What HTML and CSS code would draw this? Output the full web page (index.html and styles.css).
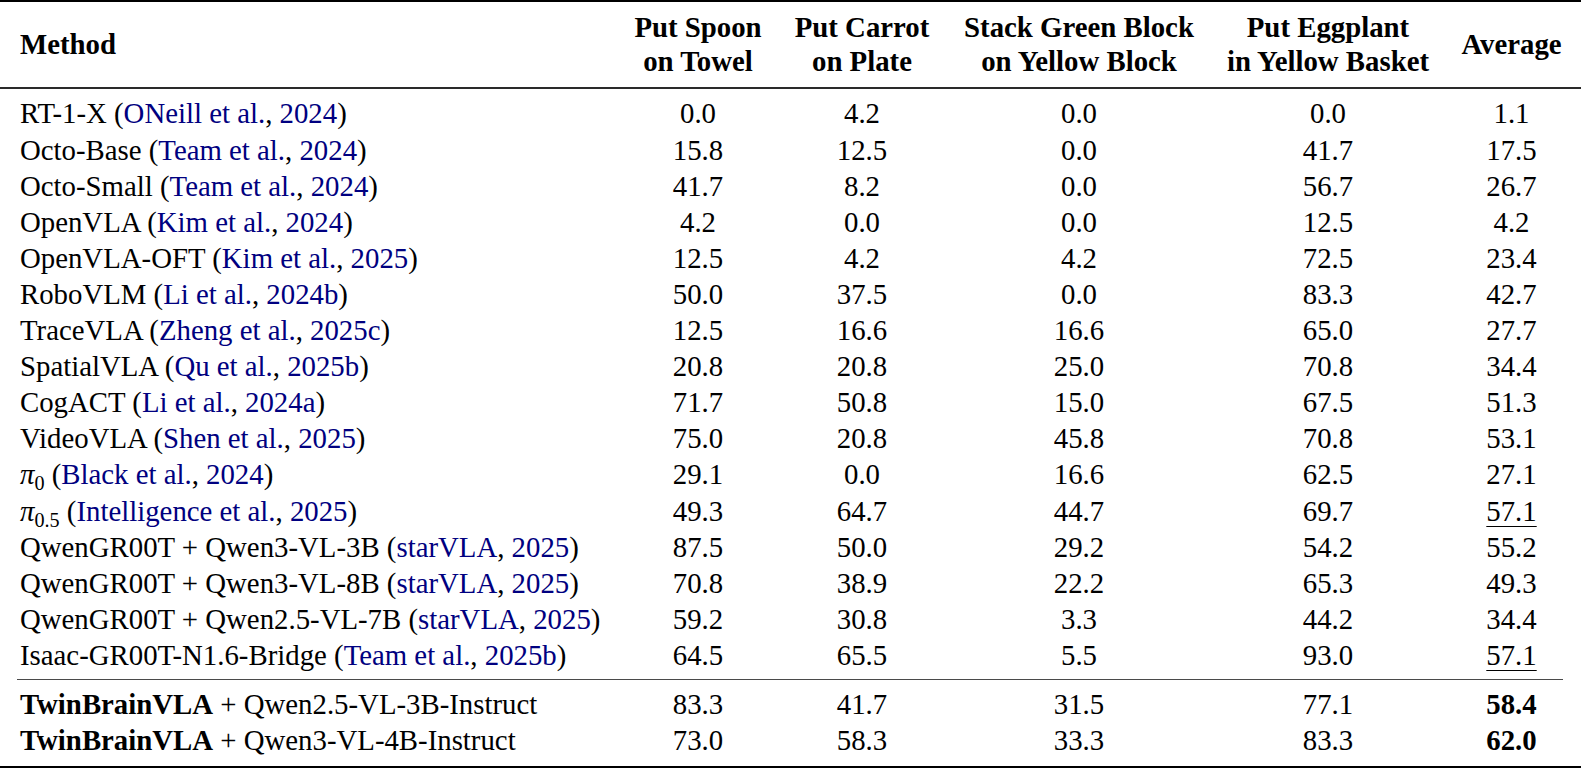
FILE: index.html
```html
<!DOCTYPE html>
<html>
<head>
<meta charset="utf-8">
<link rel="stylesheet" href="styles.css">
</head>
<body>
<table class="results">
  <colgroup>
    <col class="c-method">
    <col class="c-spoon">
    <col class="c-carrot">
    <col class="c-stack">
    <col class="c-egg">
    <col class="c-avg">
  </colgroup>
  <thead>
    <tr>
      <th class="method single">Method</th>
      <th>Put Spoon<br>on Towel</th>
      <th>Put Carrot<br>on Plate</th>
      <th>Stack Green Block<br>on Yellow Block</th>
      <th>Put Eggplant<br>in Yellow Basket</th>
      <th class="single">Average</th>
    </tr>
  </thead>
  <tbody class="main">
    <tr><td class="method">RT-1-X (<a>ONeill et al.</a>, <a>2024</a>)</td><td>0.0</td><td>4.2</td><td>0.0</td><td>0.0</td><td>1.1</td></tr>
    <tr><td class="method">Octo-Base (<a>Team et al.</a>, <a>2024</a>)</td><td>15.8</td><td>12.5</td><td>0.0</td><td>41.7</td><td>17.5</td></tr>
    <tr><td class="method">Octo-Small (<a>Team et al.</a>, <a>2024</a>)</td><td>41.7</td><td>8.2</td><td>0.0</td><td>56.7</td><td>26.7</td></tr>
    <tr><td class="method">OpenVLA (<a>Kim et al.</a>, <a>2024</a>)</td><td>4.2</td><td>0.0</td><td>0.0</td><td>12.5</td><td>4.2</td></tr>
    <tr><td class="method">OpenVLA-OFT (<a>Kim et al.</a>, <a>2025</a>)</td><td>12.5</td><td>4.2</td><td>4.2</td><td>72.5</td><td>23.4</td></tr>
    <tr><td class="method">RoboVLM (<a>Li et al.</a>, <a>2024b</a>)</td><td>50.0</td><td>37.5</td><td>0.0</td><td>83.3</td><td>42.7</td></tr>
    <tr><td class="method">TraceVLA (<a>Zheng et al.</a>, <a>2025c</a>)</td><td>12.5</td><td>16.6</td><td>16.6</td><td>65.0</td><td>27.7</td></tr>
    <tr><td class="method">SpatialVLA (<a>Qu et al.</a>, <a>2025b</a>)</td><td>20.8</td><td>20.8</td><td>25.0</td><td>70.8</td><td>34.4</td></tr>
    <tr><td class="method">CogACT (<a>Li et al.</a>, <a>2024a</a>)</td><td>71.7</td><td>50.8</td><td>15.0</td><td>67.5</td><td>51.3</td></tr>
    <tr><td class="method">VideoVLA (<a>Shen et al.</a>, <a>2025</a>)</td><td>75.0</td><td>20.8</td><td>45.8</td><td>70.8</td><td>53.1</td></tr>
    <tr><td class="method"><i class="pi">π</i><sub>0</sub> (<a>Black et al.</a>, <a>2024</a>)</td><td>29.1</td><td>0.0</td><td>16.6</td><td>62.5</td><td>27.1</td></tr>
    <tr><td class="method"><i class="pi">π</i><sub>0.5</sub> (<a>Intelligence et al.</a>, <a>2025</a>)</td><td>49.3</td><td>64.7</td><td>44.7</td><td>69.7</td><td><span class="second">57.1</span></td></tr>
    <tr><td class="method">QwenGR00T + Qwen3-VL-3B (<a>starVLA</a>, <a>2025</a>)</td><td>87.5</td><td>50.0</td><td>29.2</td><td>54.2</td><td>55.2</td></tr>
    <tr><td class="method">QwenGR00T + Qwen3-VL-8B (<a>starVLA</a>, <a>2025</a>)</td><td>70.8</td><td>38.9</td><td>22.2</td><td>65.3</td><td>49.3</td></tr>
    <tr><td class="method">QwenGR00T + Qwen2.5-VL-7B (<a>starVLA</a>, <a>2025</a>)</td><td>59.2</td><td>30.8</td><td>3.3</td><td>44.2</td><td>34.4</td></tr>
    <tr><td class="method">Isaac-GR00T-N1.6-Bridge (<a>Team et al.</a>, <a>2025b</a>)</td><td>64.5</td><td>65.5</td><td>5.5</td><td>93.0</td><td><span class="second">57.1</span></td></tr>
  </tbody>
  <tbody class="ours">
    <tr class="sep"><td colspan="6"><div class="midrule"></div></td></tr>
    <tr><td class="method"><b>TwinBrainVLA</b> + Qwen2.5-VL-3B-Instruct</td><td>83.3</td><td>41.7</td><td>31.5</td><td>77.1</td><td><b>58.4</b></td></tr>
    <tr><td class="method"><b>TwinBrainVLA</b> + Qwen3-VL-4B-Instruct</td><td>73.0</td><td>58.3</td><td>33.3</td><td>83.3</td><td><b>62.0</b></td></tr>
  </tbody>
</table>
</body>
</html>
```

FILE: styles.css
```css
html, body {
  margin: 0;
  padding: 0;
  background: #ffffff;
}

body {
  font-family: "Liberation Serif", "Times New Roman", serif;
  font-size: 28.8px;
  color: #000000;
}

.results {
  width: 1581px;
  table-layout: fixed;
  border-collapse: separate;
  border-spacing: 0;
}

.c-method { width: 616px; }
.c-spoon  { width: 164px; }
.c-carrot { width: 164px; }
.c-stack  { width: 270px; }
.c-egg    { width: 228px; }
.c-avg    { width: 139px; }

.results th {
  font-weight: bold;
  text-align: center;
  vertical-align: top;
  line-height: 34px;
  padding: 8.2px 0 8.8px 0;
  border-top: 2px solid #000;
  border-bottom: 2px solid #2a2a2a;
  white-space: nowrap;
}

.results th.single {
  padding-top: 25.4px;
  padding-bottom: 0;
}

.results td {
  text-align: center;
  line-height: 36.1px;
  padding: 0;
  white-space: nowrap;
}

.results .method {
  text-align: left;
  padding-left: 20px;
}

.main tr:first-child td {
  padding-top: 6.5px;
}

.sep td {
  padding: 0;
  line-height: 0;
}

.midrule {
  height: 1px;
  background: #4a4a4a;
  margin: 5.9px 18px 6.5px 17px;
}

.ours tr:last-child td {
  padding-bottom: 7.3px;
  border-bottom: 2px solid #000;
}

.results a {
  color: #000080;
  text-decoration: none;
}

.pi {
  font-style: italic;
}

.results sub {
  font-size: 0.7em;
  line-height: 0;
  vertical-align: -0.28em;
}

.second {
  text-decoration: underline;
  text-decoration-thickness: 1px;
  text-underline-offset: 5px;
}

.results b {
  font-weight: bold;
}
```
